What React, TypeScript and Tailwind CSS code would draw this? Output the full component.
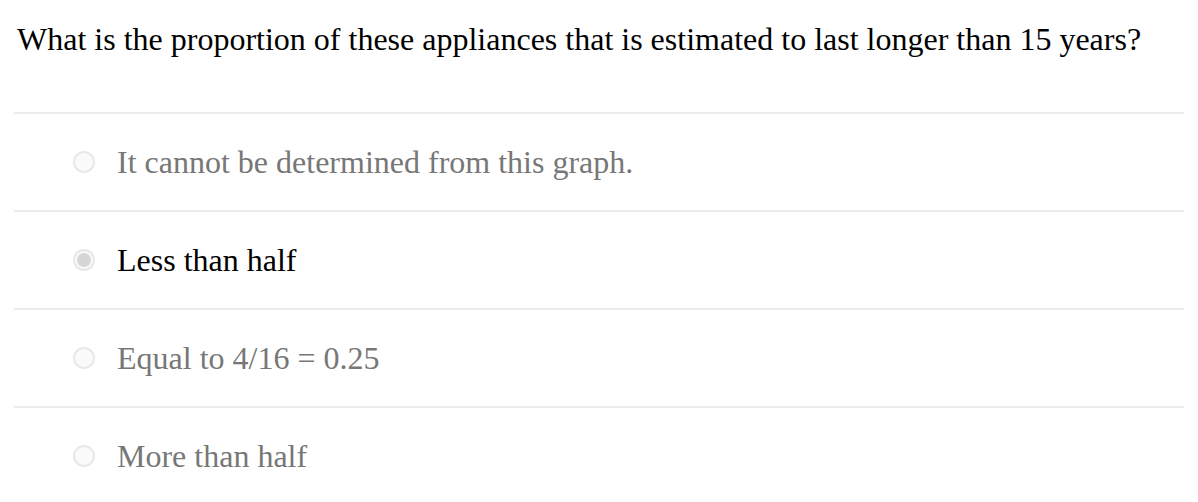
import { useState } from 'react'

const OPTIONS = [
  'It cannot be determined from this graph.',
  'Less than half',
  'Equal to 4/16 = 0.25',
  'More than half',
]

export default function App() {
  const [selected, setSelected] = useState(1)

  return (
    <div className="bg-white min-h-screen font-['Liberation_Serif','Times_New_Roman',serif]">
      <div className="px-[17px] pt-[19px] h-[112px] text-[32px] leading-[40px] text-black">
        What is the proportion of these appliances that is estimated to last longer than 15 years?
      </div>
      <div className="mx-[14px]">
        {OPTIONS.map((opt, i) => (
          <label
            key={opt}
            onClick={() => setSelected(i)}
            className="flex items-center h-[98px] border-t-2 border-[#ebebeb] cursor-pointer"
          >
            <span className="ml-[59px] w-[22px] h-[22px] rounded-full border-2 border-[#e8e8e8] bg-[#fafafa] flex items-center justify-center">
              {selected === i && <span className="w-[14px] h-[14px] rounded-full bg-[#d6d6d6]" />}
            </span>
            <span
              className={
                selected === i
                  ? 'ml-[22px] text-[32px] leading-[40px] text-black'
                  : 'ml-[22px] text-[32px] leading-[40px] text-[#777777]'
              }
            >
              {opt}
            </span>
          </label>
        ))}
      </div>
    </div>
  )
}
